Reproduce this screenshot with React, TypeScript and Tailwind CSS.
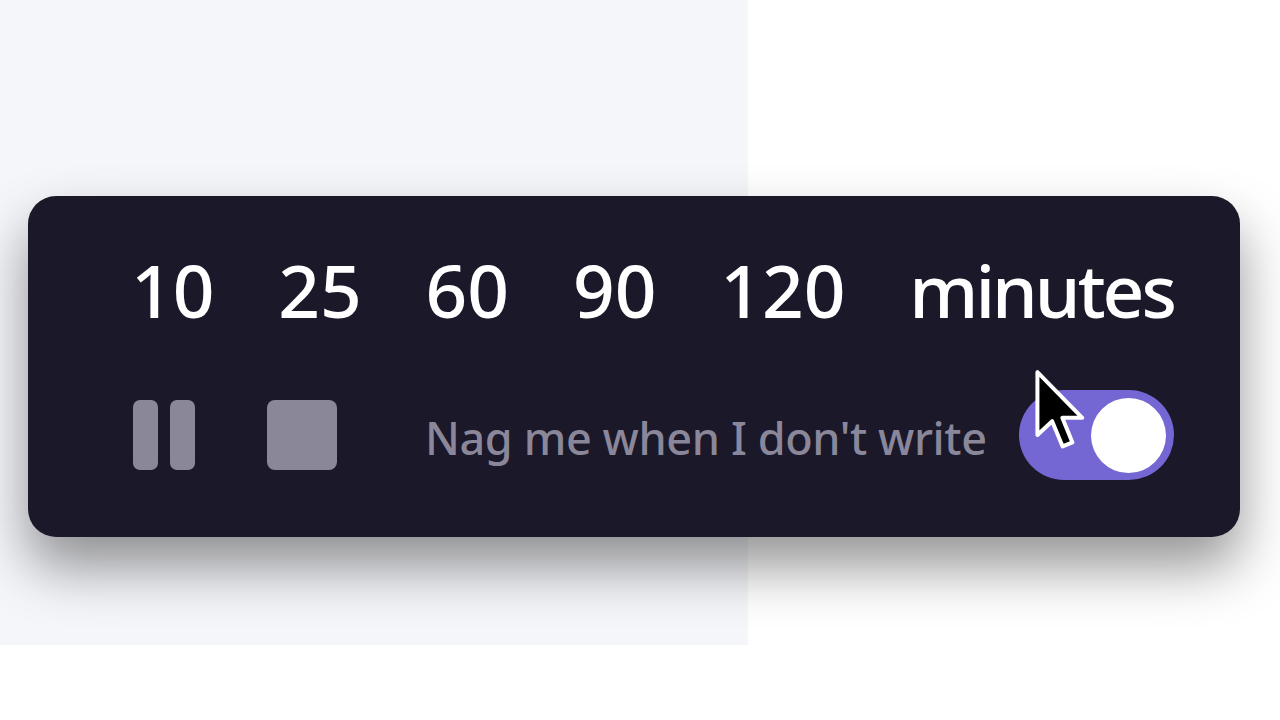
import { useMemo } from "react";

function PauseIcon() {
  return (
    <div className="flex gap-[12px]">
      <div className="w-[25px] h-[70px] rounded-[7px] bg-[#8a8799]" />
      <div className="w-[25px] h-[70px] rounded-[7px] bg-[#8a8799]" />
    </div>
  );
}

function Cursor() {
  return (
    <svg
      className="absolute left-[1034px] top-[369px]"
      width="56"
      height="86"
      viewBox="0 0 18 28"
    >
      <path
        d="M1 1 L1 21.5 L5.8 17 L9.2 25.2 L12.4 23.9 L9.1 15.9 L15.6 15.9 Z"
        fill="#000"
        stroke="#fff"
        strokeWidth="1.3"
        strokeLinejoin="round"
      />
    </svg>
  );
}

export default function App() {
  const durations = useMemo(() => ["10", "25", "60", "90", "120"], []);

  return (
    <div className="relative w-[1280px] h-[720px] bg-white overflow-hidden font-['Noto_Sans',sans-serif]">
      <div className="w-[748px] h-[645px] bg-[#f5f6fa]" />

      <div className="absolute left-[28px] top-[196px] w-[1212px] h-[341px] rounded-[28px] bg-[#1a1829] shadow-[0_30px_55px_rgba(0,0,0,0.42)] pl-[103px] pr-[66px] pt-[57px] flex flex-col">
        <div className="flex items-baseline justify-between text-white text-[73px] font-medium leading-none h-[100px]">
          {durations.map((d) => (
            <span key={d}>{d}</span>
          ))}
          <span className="tracking-[-3px]">minutes</span>
        </div>

        <div className="flex items-center mt-[37px]">
          <div className="ml-[2px]">
            <PauseIcon />
          </div>
          <div className="ml-[72px] w-[70px] h-[70px] rounded-[8px] bg-[#8a8799]" />
          <span className="ml-[88px] mt-[4px] text-[45px] font-medium leading-none text-[#8a879a] tracking-[-0.4px]">
            Nag me when I don't write
          </span>
          <div className="ml-auto w-[155px] h-[90px] rounded-full bg-[#7467d3] flex items-center justify-end pr-[8px]">
            <div className="w-[75px] h-[75px] rounded-full bg-white" />
          </div>
        </div>
      </div>

      <Cursor />
    </div>
  );
}
